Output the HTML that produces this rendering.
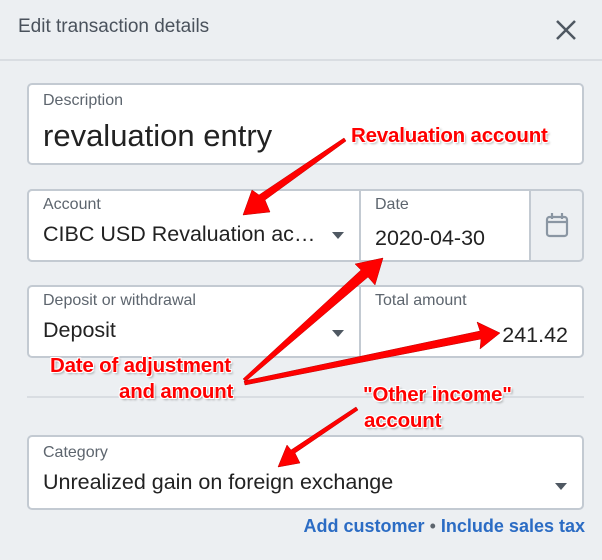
<!DOCTYPE html>
<html><head><meta charset="utf-8"><style>
*{box-sizing:border-box;margin:0;padding:0}
body{width:602px;height:560px;background:#eceff2;font-family:"Liberation Sans",sans-serif;position:relative;overflow:hidden;color:#222}
.hdr{position:absolute;left:0;top:0;width:602px;height:61px;border-bottom:2px solid #d9dde2}
.hdr .t{position:absolute;left:18px;top:16px;font-size:19px;color:#4a525c}
.box{position:absolute;background:#fff;border:2px solid #c3cad2;border-radius:5px}
.lab{position:absolute;left:14px;font-size:16px;color:#5d656e}
.val{position:absolute;left:14px;color:#222;white-space:nowrap}
.caret{position:absolute;width:0;height:0;border-left:6px solid transparent;border-right:6px solid transparent;border-top:7px solid #4f5862}
.red{position:absolute;font-weight:bold;color:#f00;font-size:20.5px;letter-spacing:-0.2px;text-shadow:1px 1px 0 #fff,-1px -1px 0 #fff,1px -1px 0 #fff,-1px 1px 0 #fff,2px 2px 2px rgba(0,0,0,.3);line-height:26px;white-space:nowrap}
a{color:#2b6cc4;text-decoration:none;font-weight:bold}
</style></head><body>
<div class="hdr"><div class="t">Edit transaction details</div>
<svg style="position:absolute;left:555px;top:19px" width="22" height="22"><path d="M2 2L20 20M20 2L2 20" stroke="#4f5862" stroke-width="2.5"/></svg></div>

<div class="box" style="left:27px;top:83px;width:557px;height:82px">
<div class="lab" style="top:7px">Description</div>
<div class="val" style="top:33px;font-size:31px">revaluation entry</div></div>

<div class="box" style="left:27px;top:189px;width:557px;height:73px;background:#eceff2"></div>
<div class="box" style="left:27px;top:189px;width:334px;height:73px;border-radius:5px 0 0 5px">
<div class="lab" style="top:5px">Account</div>
<div class="val" style="top:31px;font-size:21.5px">CIBC USD Revaluation ac…</div>
<div class="caret" style="left:303px;top:41px"></div></div>
<div class="box" style="left:359px;top:189px;width:172px;height:73px;border-radius:0;background:#fff">
<div class="lab" style="top:5px">Date</div>
<div class="val" style="top:35px;font-size:21.5px">2020-04-30</div></div>
<svg style="position:absolute;left:544px;top:211px" width="26" height="28"><rect x="3" y="6" width="20" height="19" rx="2.5" fill="none" stroke="#8a96a3" stroke-width="2.2"/><path d="M3 11H23M8 2V8M18 2V8" stroke="#8a96a3" stroke-width="2.2"/></svg>

<div class="box" style="left:27px;top:285px;width:334px;height:73px;border-radius:5px 0 0 5px">
<div class="lab" style="top:5px">Deposit or withdrawal</div>
<div class="val" style="top:31px;font-size:21.5px">Deposit</div>
<div class="caret" style="left:303px;top:43px"></div></div>
<div class="box" style="left:359px;top:285px;width:225px;height:73px;border-radius:0 5px 5px 0">
<div class="lab" style="top:5px">Total amount</div>
<div class="val" style="top:36px;right:14px;left:auto;font-size:21.5px">241.42</div></div>

<div style="position:absolute;left:27px;top:396px;width:557px;height:2px;background:#d9dde2"></div>

<div class="box" style="left:27px;top:435px;width:557px;height:75px">
<div class="lab" style="top:7px">Category</div>
<div class="val" style="top:33px;font-size:21.5px">Unrealized gain on foreign exchange</div>
<div class="caret" style="left:526px;top:46px"></div></div>

<div style="position:absolute;right:17px;top:516px;font-size:18px"><a>Add customer</a> <span style="color:#5d656e">•</span> <a>Include sales tax</a></div>

<svg style="position:absolute;left:0;top:0" width="602" height="560">
<g fill="#f00" stroke="#b00" stroke-width=".5">
<polygon points="344,138 346,141 265,200 270,212 243,215 252,190 259,195"/>
<polygon points="246,381 243,379 361,270 355,264 383,258 375,285 368,277"/>
<polygon points="245,385 244,381 480,331 477,322 500,333 480,349 481,339"/>
<polygon points="356,407 358,410 295,453 300,463 278,467 287,445 291,450"/>
</g></svg>

<div class="red" style="left:351px;top:123px">Revaluation account</div>
<div class="red" style="left:50px;top:353px">Date of adjustment</div>
<div class="red" style="left:119px;top:379px">and amount</div>
<div class="red" style="left:363px;top:382px">"Other income"</div>
<div class="red" style="left:364px;top:408px">account</div>
</body></html>
